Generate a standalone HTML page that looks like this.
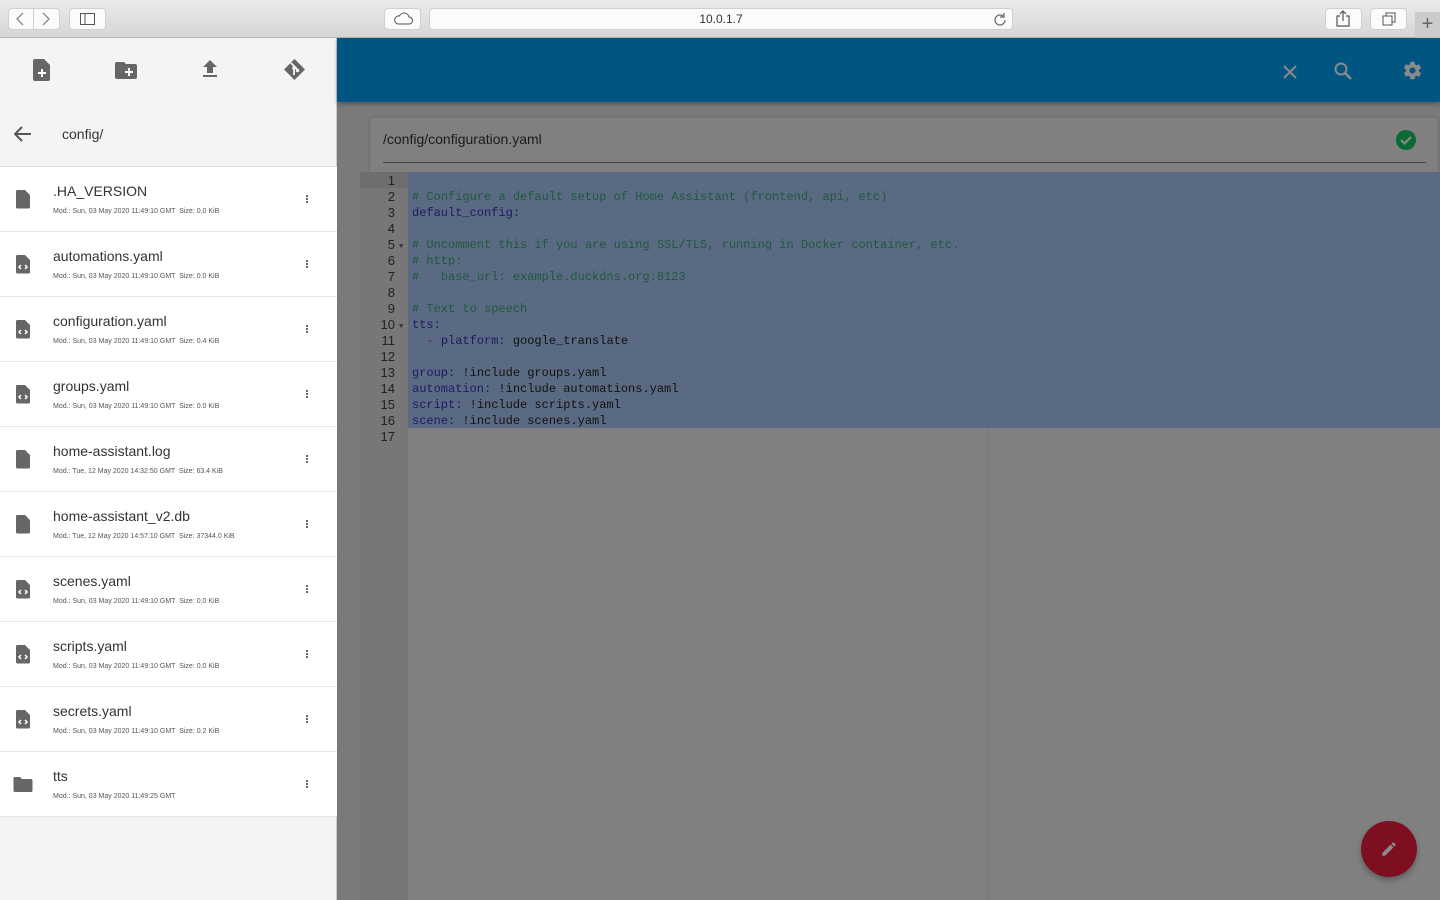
<!DOCTYPE html>
<html><head><meta charset="utf-8"><style>
*{margin:0;padding:0;box-sizing:border-box}
body{width:1440px;height:900px;overflow:hidden;font-family:"Liberation Sans",sans-serif;position:relative;background:#7a7a7a}
.bar{position:absolute;left:0;top:0;width:1440px;height:38px;background:linear-gradient(#ebebeb,#d6d6d6);border-bottom:1px solid #b8b8b8}
.btn{position:absolute;top:8px;height:22px;background:#fbfbfb;border:1px solid #cfcfcf;border-radius:4px}
.side{position:absolute;left:0;top:38px;width:337px;height:862px;background:#f4f4f4;border-right:1px solid #ccc}
.item{position:absolute;left:0;width:337px;height:65px;background:#fff;border-bottom:1px solid #e6e6e6}
.item .n{position:absolute;left:53px;top:16px;font-size:14px;color:#333}
.item .m{position:absolute;left:53px;top:41px;font-size:7px;color:#555;white-space:pre}
.item svg.ic{position:absolute;left:12px;top:21px}
.item .d{position:absolute;left:306px;top:28px;width:3px}
.item .d i{display:block;width:2px;height:2px;background:#666;margin-bottom:1.2px}
.hdr{position:absolute;left:337px;top:38px;width:1103px;height:64px;background:#005581;box-shadow:0 2px 4px rgba(0,0,0,.3)}
.card{position:absolute;left:370px;top:118px;width:1068px;height:782px;background:#808080;box-shadow:0 0 3px rgba(0,0,0,.2)}
.code{position:absolute;left:360px;top:172px;width:1080px;height:728px;background:#808080}
.gut{position:absolute;left:360px;top:172px;width:48px;height:728px;background:#777}
.sel{position:absolute;left:408px;top:172px;width:1032px;height:256px;background:#5a6a82}
.lines{position:absolute;left:360px;top:172px;font-family:"Liberation Mono",monospace;font-size:12px;line-height:16px}
.ln{position:absolute;left:0;width:35px;text-align:right;color:#222;font-family:"Liberation Sans",sans-serif;font-size:13px}
.fd{position:absolute;left:39px;font-size:7px;color:#333}
.tx{position:absolute;left:52px;white-space:pre;color:#111}
.c{color:#1f5a3d}.k{color:#1c1a66}.p{color:#6a1f45}
</style></head><body>
<div class="bar">
 <div class="btn" style="left:8px;width:52px"></div>
 <div style="position:absolute;left:33px;top:8px;width:1px;height:22px;background:#cfcfcf"></div>
 <svg style="position:absolute;left:14px;top:12px" width="40" height="14"><path d="M9 1L3 7l6 6M29 1l6 6-6 6" stroke="#8a8a8a" stroke-width="1.3" fill="none"/></svg>
 <div class="btn" style="left:69px;width:37px"></div>
 <svg style="position:absolute;left:80px;top:13px" width="15" height="12"><rect x=".5" y=".5" width="14" height="11" fill="none" stroke="#555"/><line x1="5" y1="0" x2="5" y2="12" stroke="#555"/></svg>
 <div class="btn" style="left:384px;width:37px"></div>
 <svg style="position:absolute;left:393px;top:12px" width="20" height="13"><path d="M5 12h11a3.5 3.5 0 000-7 5 5 0 00-9.5-1A4 4 0 005 12z" fill="none" stroke="#555" stroke-width="1"/></svg>
 <div class="btn" style="left:429px;width:584px;text-align:center;font-size:12px;line-height:20px;color:#333">10.0.1.7</div>
 <svg style="position:absolute;left:993px;top:12px" width="14" height="14"><path d="M11 5a5 5 0 10 1 3" fill="none" stroke="#666" stroke-width="1.2"/><path d="M11 1v4h-4" fill="none" stroke="#666" stroke-width="1.2"/></svg>
 <div class="btn" style="left:1325px;width:37px"></div>
 <svg style="position:absolute;left:1336px;top:10px" width="14" height="17"><path d="M4 6H1v10h12V6h-3M7 1v10M4 4l3-3 3 3" fill="none" stroke="#555" stroke-width="1.2"/></svg>
 <div class="btn" style="left:1370px;width:37px"></div>
 <svg style="position:absolute;left:1382px;top:12px" width="14" height="14"><rect x="1" y="4" width="9" height="9" fill="none" stroke="#555"/><path d="M4 4V1h9v9h-3" fill="none" stroke="#555"/></svg>
 <div style="position:absolute;left:1415px;top:12px;width:25px;height:26px;background:#cbcbcb;font-size:20px;line-height:24px;text-align:center;color:#666">+</div>
</div>

<div class="side">
 <svg style="position:absolute;left:33px;top:21px" width="18" height="22" viewBox="0 0 18 22"><path d="M2 0h9l6 6v14a2 2 0 01-2 2H2a2 2 0 01-2-2V2a2 2 0 012-2z" fill="#666"/><path d="M8 10h2v3h3v2h-3v3H8v-3H5v-2h3z" fill="#fff"/></svg>
 <svg style="position:absolute;left:115px;top:24px" width="22" height="17" viewBox="0 0 22 17"><path d="M2 0h7l2 2h9a2 2 0 012 2v11a2 2 0 01-2 2H2a2 2 0 01-2-2V2a2 2 0 012-2z" fill="#666"/><path d="M13 6h2v3h3v2h-3v3h-2v-3h-3V9h3z" fill="#fff"/></svg>
 <svg style="position:absolute;left:202px;top:22px" width="16" height="18" viewBox="0 0 16 18"><path d="M5 13V7H1l7-7 7 7h-4v6zM1 15h14v2H1z" fill="#666"/></svg>
 <svg style="position:absolute;left:284px;top:21px" width="21" height="21" viewBox="0 0 21 21"><path d="M10.5 0L21 10.5 10.5 21 0 10.5z" fill="#666"/><path d="M7 4l6 6M10 9v7" stroke="#f4f4f4" stroke-width="1.8"/><circle cx="10" cy="9" r="1.8" fill="#f4f4f4"/><circle cx="13.5" cy="11.5" r="1.8" fill="#f4f4f4"/></svg>
 <svg style="position:absolute;left:14px;top:88px" width="18" height="16"><path d="M17 8H2M8 1L1 8l7 7" stroke="#555" stroke-width="2" fill="none"/></svg>
 <div style="position:absolute;left:62px;top:88px;font-size:14px;color:#333">config/</div>
 <div style="position:absolute;left:0;top:128px;width:337px;height:1px;background:#ddd"></div>
</div>

<div id="list"></div>

<div class="hdr">
 <svg style="position:absolute;left:946px;top:27px" width="14" height="14"><path d="M1 1l12 12M13 1L1 13" stroke="#8a8a8a" stroke-width="2"/></svg>
 <svg style="position:absolute;left:997px;top:24px" width="19" height="19"><circle cx="7" cy="7" r="5.5" fill="none" stroke="#8a8a8a" stroke-width="2"/><path d="M11 11l6 6" stroke="#8a8a8a" stroke-width="2.4"/></svg>
 <svg style="position:absolute;left:1065px;top:22px" width="21" height="21" viewBox="0 0 24 24"><path fill="#8a8a8a" d="M19.4 13c.04-.3.06-.65.06-1s-.02-.7-.06-1l2.1-1.65c.2-.15.24-.42.12-.64l-2-3.460c-.12-.22-.39-.3-.61-.22l-2.49 1c-.52-.4-1.080-.73-1.690-.98l-.38-2.65A.49.49 0 0014 2h-4c-.25 0-.46.18-.49.42l-.38 2.65c-.61.25-1.17.59-1.69.98l-2.49-1c-.23-.09-.49 0-.61.22l-2 3.46c-.13.22-.07.49.12.64L4.57 11c-.04.32-.07.66-.07 1s.03.68.07 1l-2.11 1.65c-.19.15-.24.42-.12.64l2 3.46c.12.22.39.3.61.22l2.49-1c.52.4 1.08.73 1.69.98l.38 2.65c.03.24.24.42.49.42h4c.25 0 .46-.18.49-.42l.38-2.65c.61-.25 1.17-.59 1.69-.98l2.49 1c.23.09.49 0 .61-.22l2-3.46c.12-.22.07-.49-.12-.64zM12 15.5A3.5 3.5 0 1112 8.5a3.5 3.5 0 010 7z"/></svg>
</div>

<div class="card">
 <div style="position:absolute;left:13px;top:13px;font-size:14px;color:#1a1a1a">/config/configuration.yaml</div>
 <div style="position:absolute;left:13px;top:44px;width:1043px;height:1px;background:#444"></div>
 <svg style="position:absolute;left:1026px;top:12px" width="20" height="20"><circle cx="10" cy="10" r="10" fill="#0a6a35"/><path d="M5 10l3.5 3.5L15 7" stroke="#888" stroke-width="2.2" fill="none"/></svg>
</div>
<div class="code"></div>
<div class="gut"></div>
<div style="position:absolute;left:360px;top:172px;width:48px;height:16px;background:#6e6e6e"></div>
<div class="sel"></div>
<div style="position:absolute;left:988px;top:428px;width:1px;height:472px;background:#777"></div>
<div class="lines" id="code"></div>

<div style="position:absolute;left:1361px;top:821px;width:56px;height:56px;border-radius:50%;background:#7d0f20;box-shadow:0 3px 6px rgba(0,0,0,.3)"></div>
<svg style="position:absolute;left:1380px;top:840px" width="18" height="18" viewBox="0 0 24 24"><path fill="#8a8a8a" d="M3 17.25V21h3.75L17.81 9.94l-3.75-3.75L3 17.25zM20.71 7.04a1 1 0 000-1.41l-2.34-2.34a1 1 0 00-1.41 0l-1.83 1.83 3.75 3.75 1.83-1.83z"/></svg>

<script>
var files=[["file",".HA_VERSION","Mod.: Sun, 03 May 2020 11:49:10 GMT  Size: 0.0 KiB"],
["code","automations.yaml","Mod.: Sun, 03 May 2020 11:49:10 GMT  Size: 0.0 KiB"],
["code","configuration.yaml","Mod.: Sun, 03 May 2020 11:49:10 GMT  Size: 0.4 KiB"],
["code","groups.yaml","Mod.: Sun, 03 May 2020 11:49:10 GMT  Size: 0.0 KiB"],
["file","home-assistant.log","Mod.: Tue, 12 May 2020 14:32:50 GMT  Size: 63.4 KiB"],
["file","home-assistant_v2.db","Mod.: Tue, 12 May 2020 14:57:10 GMT  Size: 37344.0 KiB"],
["code","scenes.yaml","Mod.: Sun, 03 May 2020 11:49:10 GMT  Size: 0.0 KiB"],
["code","scripts.yaml","Mod.: Sun, 03 May 2020 11:49:10 GMT  Size: 0.0 KiB"],
["code","secrets.yaml","Mod.: Sun, 03 May 2020 11:49:10 GMT  Size: 0.2 KiB"],
["folder","tts","Mod.: Sun, 03 May 2020 11:49:25 GMT"]];
var icons={
file:'<svg class="ic" width="22" height="22" viewBox="0 0 22 22"><path d="M5 2h8l5 5v12a1.5 1.5 0 01-1.5 1.5h-11A1.5 1.5 0 014 19V3.5A1.5 1.5 0 015 2z" fill="#666"/></svg>',
code:'<svg class="ic" width="22" height="22" viewBox="0 0 22 22"><path d="M5 2h8l5 5v12a1.5 1.5 0 01-1.5 1.5h-11A1.5 1.5 0 014 19V3.5A1.5 1.5 0 015 2z" fill="#666"/><path d="M9 12l-2 2 2 2M13 12l2 2-2 2" stroke="#fff" stroke-width="1.5" fill="none"/></svg>',
folder:'<svg class="ic" width="22" height="22" viewBox="0 0 22 22"><path d="M2 4h6l2 2h9a1.5 1.5 0 011.5 1.5v10A1.5 1.5 0 0119 19H3a1.5 1.5 0 01-1.5-1.5v-12A1.5 1.5 0 012 4z" fill="#666"/></svg>'};
var h="";files.forEach(function(f,i){h+='<div class="item" style="top:'+(167+i*65)+'px">'+icons[f[0]]+'<div class="n">'+f[1]+'</div><div class="m">'+f[2]+'</div><div class="d"><i></i><i></i><i></i></div></div>';});
document.getElementById("list").innerHTML=h;
var L=['','<span class="c"># Configure a default setup of Home Assistant (frontend, api, etc)</span>','<span class="k">default_config:</span>','',
'<span class="c"># Uncomment this if you are using SSL/TLS, running in Docker container, etc.</span>','<span class="c"># http:</span>','<span class="c">#   base_url: example.duckdns.org:8123</span>','',
'<span class="c"># Text to speech</span>','<span class="k">tts:</span>','  <span class="p">-</span> <span class="k">platform:</span> google_translate','',
'<span class="k">group:</span> !include groups.yaml','<span class="k">automation:</span> !include automations.yaml','<span class="k">script:</span> !include scripts.yaml','<span class="k">scene:</span> !include scenes.yaml',''];
var c="";L.forEach(function(t,i){var n=i+1;c+='<div class="ln" style="top:'+(i*16+1)+'px">'+n+'</div>'+((n==5||n==10)?'<div class="fd" style="top:'+(i*16+3)+'px">&#9660;</div>':'')+'<div class="tx" style="top:'+(i*16+1)+'px">'+t+'</div>';});
document.getElementById("code").innerHTML=c;
</script>
</body></html>
